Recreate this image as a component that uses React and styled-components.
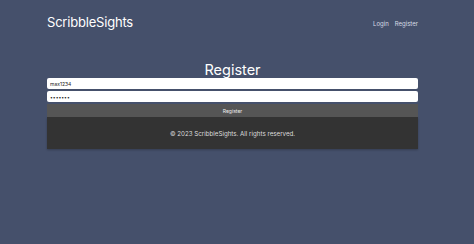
import React from 'react';
import styled, { createGlobalStyle } from 'styled-components';

const GlobalStyle = createGlobalStyle`
  html, body {
    margin: 0;
    padding: 0;
    background: #45506b;
    font-family: 'Inter', 'Liberation Sans', sans-serif;
  }
`;

const Page = styled.div`
  width: 371px;
  margin-left: 47px;
  min-height: 244px;
`;

const Header = styled.header`
  display: flex;
  justify-content: space-between;
  align-items: center;
  padding-top: 13px;
  height: 18px;
`;

const Brand = styled.div`
  color: #fff;
  font-size: 13px;
  letter-spacing: -0.2px;
`;

const Nav = styled.nav`
  display: flex;
  gap: 6px;
  padding-top: 2px;
`;

const NavLink = styled.a`
  color: #d8dce6;
  font-size: 6px;
  text-decoration: none;
`;

const Main = styled.main`
  margin-top: 31px;
`;

const Title = styled.h1`
  margin: 0;
  text-align: center;
  color: #fff;
  font-size: 14.5px;
  font-weight: 400;
  line-height: 16px;
`;

const Form = styled.form`
  display: flex;
  flex-direction: column;
  gap: 2px;
`;

const Input = styled.input`
  box-sizing: border-box;
  width: 100%;
  height: 11px;
  margin: 0;
  padding: 0 3px;
  border: none;
  border-radius: 2px;
  background: #fff;
  font-family: inherit;
  font-size: 5px;
  color: #222;
  outline: none;
`;

const Button = styled.button`
  height: 13px;
  margin: 0;
  border: none;
  background: #555555;
  color: #eee;
  font-family: inherit;
  font-size: 5px;
`;

const Footer = styled.footer`
  height: 32px;
  display: flex;
  align-items: center;
  justify-content: center;
  background: #333333;
  color: #ddd;
  font-size: 6.2px;
  box-shadow: 0 1px 2px rgba(0, 0, 0, 0.25);
`;

const App = () => {
  return (
    <>
      <GlobalStyle />
      <Page>
        <Header>
          <Brand>ScribbleSights</Brand>
          <Nav>
            <NavLink href='#'>Login</NavLink>
            <NavLink href='#'>Register</NavLink>
          </Nav>
        </Header>
        <Main>
          <Title>Register</Title>
          <Form onSubmit={(e) => e.preventDefault()}>
            <Input type='text' defaultValue='max1234' />
            <Input type='password' defaultValue='1234567' />
            <Button type='submit'>Register</Button>
          </Form>
        </Main>
        <Footer>© 2023 ScribbleSights. All rights reserved.</Footer>
      </Page>
    </>
  );
};

export default App;
